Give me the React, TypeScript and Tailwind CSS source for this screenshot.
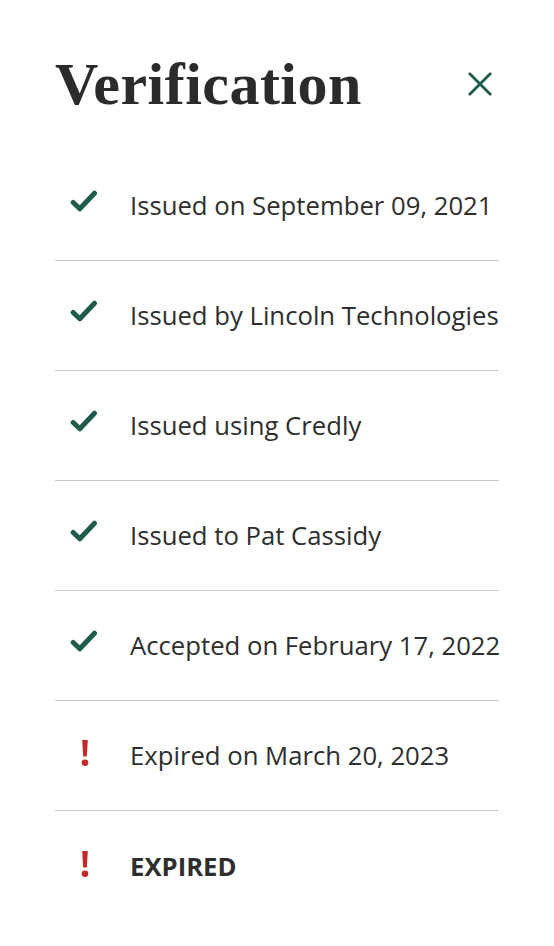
import React from "react";

type Item = { ok: boolean; text: string; strong?: boolean };

const ITEMS: Item[] = [
  { ok: true, text: "Issued on September 09, 2021" },
  { ok: true, text: "Issued by Lincoln Technologies" },
  { ok: true, text: "Issued using Credly" },
  { ok: true, text: "Issued to Pat Cassidy" },
  { ok: true, text: "Accepted on February 17, 2022" },
  { ok: false, text: "Expired on March 20, 2023" },
  { ok: false, text: "EXPIRED", strong: true },
];

const CheckIcon = () => (
  <svg width="28" height="24" viewBox="0 0 28 24" className="text-[#1f5a4e]">
    <path
      d="M3.2 13.5 L9.8 19.8 L24.5 4.2"
      fill="none"
      stroke="currentColor"
      strokeWidth="5"
      strokeLinecap="round"
      strokeLinejoin="round"
    />
  </svg>
);

const AlertIcon = () => (
  <svg width="8" height="28" viewBox="0 0 8 28" className="text-[#c62828]">
    <path d="M1.2 1 H6.8 L5.8 17.5 H2.2 Z" fill="currentColor" />
    <circle cx="4" cy="23.8" r="3.3" fill="currentColor" />
  </svg>
);

const App: React.FC = () => {
  return (
    <div className="min-h-screen bg-white px-[55px] pt-[54px] pb-6 [font-family:'Open_Sans',sans-serif] text-[#2e2e2e]">
      <header className="flex items-center justify-between mb-[37px]">
        <h1 className="h-[60px] text-[60px] leading-none font-bold tracking-[0.008em] text-[#2b2b2b] [font-family:'Liberation_Serif',serif]">
          Verification
        </h1>
        <button className="mr-[6px] text-[#1f5a4e]" aria-label="Close">
          <svg width="26" height="26" viewBox="0 0 26 26">
            <path
              d="M2 2 L24 24 M24 2 L2 24"
              stroke="currentColor"
              strokeWidth="2.8"
              fill="none"
            />
          </svg>
        </button>
      </header>

      <ul>
        {ITEMS.map((item, i) => (
          <li
            key={i}
            className={`flex items-center h-[110px] ${
              i < ITEMS.length - 1 ? "border-b border-[#c9c9c9]" : ""
            }`}
          >
            <div className="w-[75px] shrink-0 pl-[15px] flex items-start">
              {item.ok ? (
                <span className="-mt-[10px]">
                  <CheckIcon />
                </span>
              ) : (
                <span className="pl-[11px] -mt-[5px]">
                  <AlertIcon />
                </span>
              )}
            </div>
            <span
              className={`pt-[2px] whitespace-nowrap text-[25.7px] ${
                item.strong ? "font-bold" : "font-normal"
              }`}
            >
              {item.text}
            </span>
          </li>
        ))}
      </ul>
    </div>
  );
};

export default App;
